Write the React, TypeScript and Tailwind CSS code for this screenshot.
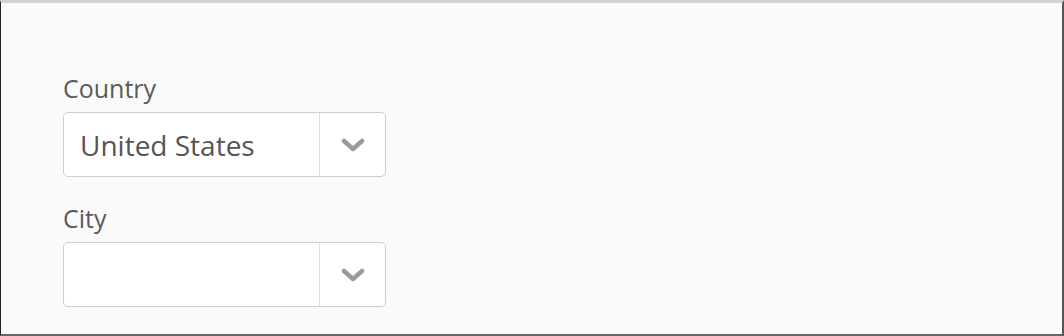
import React from "react";

function Chevron() {
	return (
		<svg width="24" height="14" viewBox="0 0 24 14" fill="none">
			<polyline points="3,3 12,11 21,3" stroke="#9b9b9b" strokeWidth="4.5" strokeLinecap="round" strokeLinejoin="round" />
		</svg>
	);
}

function SelectField({ label, value }: { label: string; value?: string }) {
	return (
		<div className="flex flex-col">
			<label className="text-[25px] leading-[32px] text-[#5a5a5a]">{label}</label>
			<div className="mt-[8px] flex h-[65px] w-[323px] items-stretch rounded-[5px] border border-[#cfcfcf] bg-white">
				<div className="flex flex-1 items-center pl-[16px] text-[28px] text-[#555]">{value}</div>
				<div className="flex w-[66px] items-center justify-center border-l border-[#dedede]">
					<Chevron />
				</div>
			</div>
		</div>
	);
}

export default function App() {
	return (
		<div
			className="h-[336px] w-[1064px] border-t-[3px] border-r-2 border-b-2 border-l border-t-[#d3d1d3] border-r-[#555] border-b-[#666] border-l-[#222] bg-[#fafafa]"
			style={{ fontFamily: '"Open Sans", sans-serif' }}
		>
			<div className="flex flex-col gap-[25px] pl-[62px] pt-[69px]">
				<SelectField label="Country" value="United States" />
				<SelectField label="City" />
			</div>
		</div>
	);
}
